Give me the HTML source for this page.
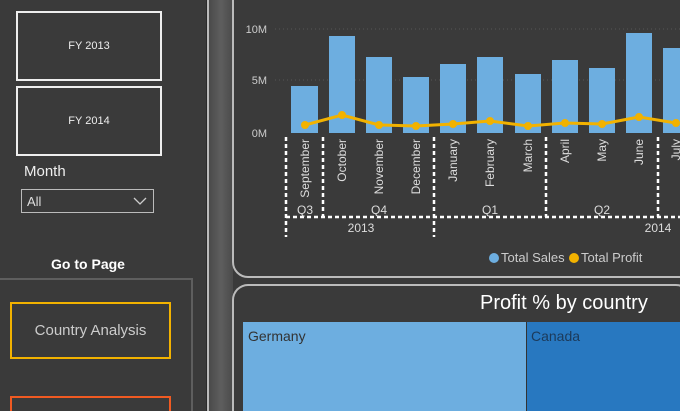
<!DOCTYPE html>
<html><head><meta charset="utf-8"><style>
*{margin:0;padding:0;box-sizing:border-box}
html{width:680px;height:411px;overflow:hidden}
body{width:680px;height:411px;overflow:hidden;background:#3a3a3a;font-family:"Liberation Sans",sans-serif;position:relative}
.a{position:absolute}
.fy{border:2px solid #eee;color:#eee;font-size:11px;display:flex;align-items:center;justify-content:center}
</style></head><body>
<div class="a" style="left:206px;top:0;width:1px;height:411px;background:#2a2a2a"></div>
<div class="a" style="left:207px;top:0;width:2px;height:411px;background:#bbb"></div>
<div class="a" style="left:209px;top:0;width:24px;height:411px;background:linear-gradient(90deg,#4a4a4a,#5e5e5e,#4a4a4a)"></div>

<div class="a fy" style="left:16px;top:11px;width:146px;height:70px">FY 2013</div>
<div class="a fy" style="left:16px;top:86px;width:146px;height:70px">FY 2014</div>
<div class="a" style="left:24px;top:163px;color:#eee;font-size:15px">Month</div>
<div class="a" style="left:21px;top:189px;width:133px;height:24px;border:1px solid #bbb;color:#ddd;font-size:13px;padding:4px 5px">All
<svg class="a" style="right:6px;top:7px" width="14" height="9"><path d="M1 1 L7 7 L13 1" stroke="#ccc" fill="none" stroke-width="1.3"/></svg></div>
<div class="a" style="left:0;top:256px;width:176px;text-align:center;color:#fff;font-weight:bold;font-size:14px">Go to Page</div>
<div class="a" style="left:-2px;top:278px;width:195px;height:133px;border:2px solid #5e5e5e;border-bottom:none"></div>
<div class="a" style="left:10px;top:302px;width:161px;height:57px;border:2px solid #f2b200;color:#ccc;font-size:15px;display:flex;align-items:center;justify-content:center">Country Analysis</div>
<div class="a" style="left:10px;top:396px;width:161px;height:15px;border:2px solid #f05a22;border-bottom:none"></div>

<div class="a" style="left:232px;top:-20px;width:470px;height:298px;border:2px solid #bbb;border-radius:16px;background:#3a3a3a"></div>
<div class="a" style="left:232px;top:284px;width:460px;height:127px;border:2px solid #bbb;border-bottom:none;border-radius:16px 16px 0 0;background:#3a3a3a"></div>

<svg class="a" style="left:0;top:0" width="680" height="280" font-family="Liberation Sans" >
<g fill="#ccc" font-size="11" text-anchor="end"><text x="267" y="33">10M</text><text x="267" y="84">5M</text><text x="267" y="137">0M</text></g>
<g stroke="#555" stroke-dasharray="1 3"><line x1="275" y1="29" x2="680" y2="29"/><line x1="275" y1="80" x2="680" y2="80"/></g>
<g fill="#6daee0">
<rect x="291" y="86" width="27" height="47"/><rect x="329" y="36" width="26" height="97"/><rect x="366" y="57" width="26" height="76"/><rect x="403" y="77" width="26" height="56"/><rect x="440" y="64" width="26" height="69"/><rect x="477" y="57" width="26" height="76"/><rect x="515" y="74" width="26" height="59"/><rect x="552" y="60" width="26" height="73"/><rect x="589" y="68" width="26" height="65"/><rect x="626" y="33" width="26" height="100"/><rect x="663" y="48" width="26" height="85"/></g>
<polyline fill="none" stroke="#f2b200" stroke-width="3" points="305,125 342,115 379,125 416,126 453,124 490,121 528,126 565,123 602,124 639,117 676,123"/>
<g fill="#f2b200"><circle cx="305" cy="125" r="4"/><circle cx="342" cy="115" r="4"/><circle cx="379" cy="125" r="4"/><circle cx="416" cy="126" r="4"/><circle cx="453" cy="124" r="4"/><circle cx="490" cy="121" r="4"/><circle cx="528" cy="126" r="4"/><circle cx="565" cy="123" r="4"/><circle cx="602" cy="124" r="4"/><circle cx="639" cy="117" r="4"/><circle cx="676" cy="123" r="4"/></g>
<g fill="#ddd" font-size="12" text-anchor="end">
<text transform="translate(309,139) rotate(-90)">September</text><text transform="translate(346,139) rotate(-90)">October</text><text transform="translate(383,139) rotate(-90)">November</text><text transform="translate(420,139) rotate(-90)">December</text><text transform="translate(457,139) rotate(-90)">January</text><text transform="translate(494,139) rotate(-90)">February</text><text transform="translate(532,139) rotate(-90)">March</text><text transform="translate(569,139) rotate(-90)">April</text><text transform="translate(606,139) rotate(-90)">May</text><text transform="translate(643,139) rotate(-90)">June</text><text transform="translate(680,139) rotate(-90)">July</text></g>
<g stroke="#fff" stroke-width="2.5" stroke-dasharray="4 3" fill="none">
<line x1="286" y1="137" x2="286" y2="237"/><line x1="323" y1="137" x2="323" y2="217"/><line x1="434" y1="137" x2="434" y2="237"/><line x1="546" y1="137" x2="546" y2="217"/><line x1="658" y1="137" x2="658" y2="217"/><line x1="286" y1="217" x2="680" y2="217"/></g>
<g fill="#ddd" font-size="12" text-anchor="middle"><text x="305" y="214">Q3</text><text x="379" y="214">Q4</text><text x="490" y="214">Q1</text><text x="602" y="214">Q2</text><text x="361" y="232">2013</text><text x="658" y="232">2014</text></g>
<circle cx="494" cy="258" r="5" fill="#6daee0"/><text x="501" y="262" fill="#ccc" font-size="13">Total Sales</text>
<circle cx="574" cy="258" r="5" fill="#f2b200"/><text x="581" y="262" fill="#ccc" font-size="13">Total Profit</text>
</svg>

<div class="a" style="left:480px;top:292px;color:#fff;font-size:20px">Profit % by country</div>
<div class="a" style="left:243px;top:322px;width:283px;height:89px;background:#6daee0;color:#333;font-size:14px;padding:6px 5px">Germany</div>
<div class="a" style="left:526px;top:322px;width:1px;height:89px;background:#333"></div>
<div class="a" style="left:527px;top:322px;width:153px;height:89px;background:#2878c0;color:#1c3a5a;font-size:14px;padding:6px 4px">Canada</div>
</body></html>
